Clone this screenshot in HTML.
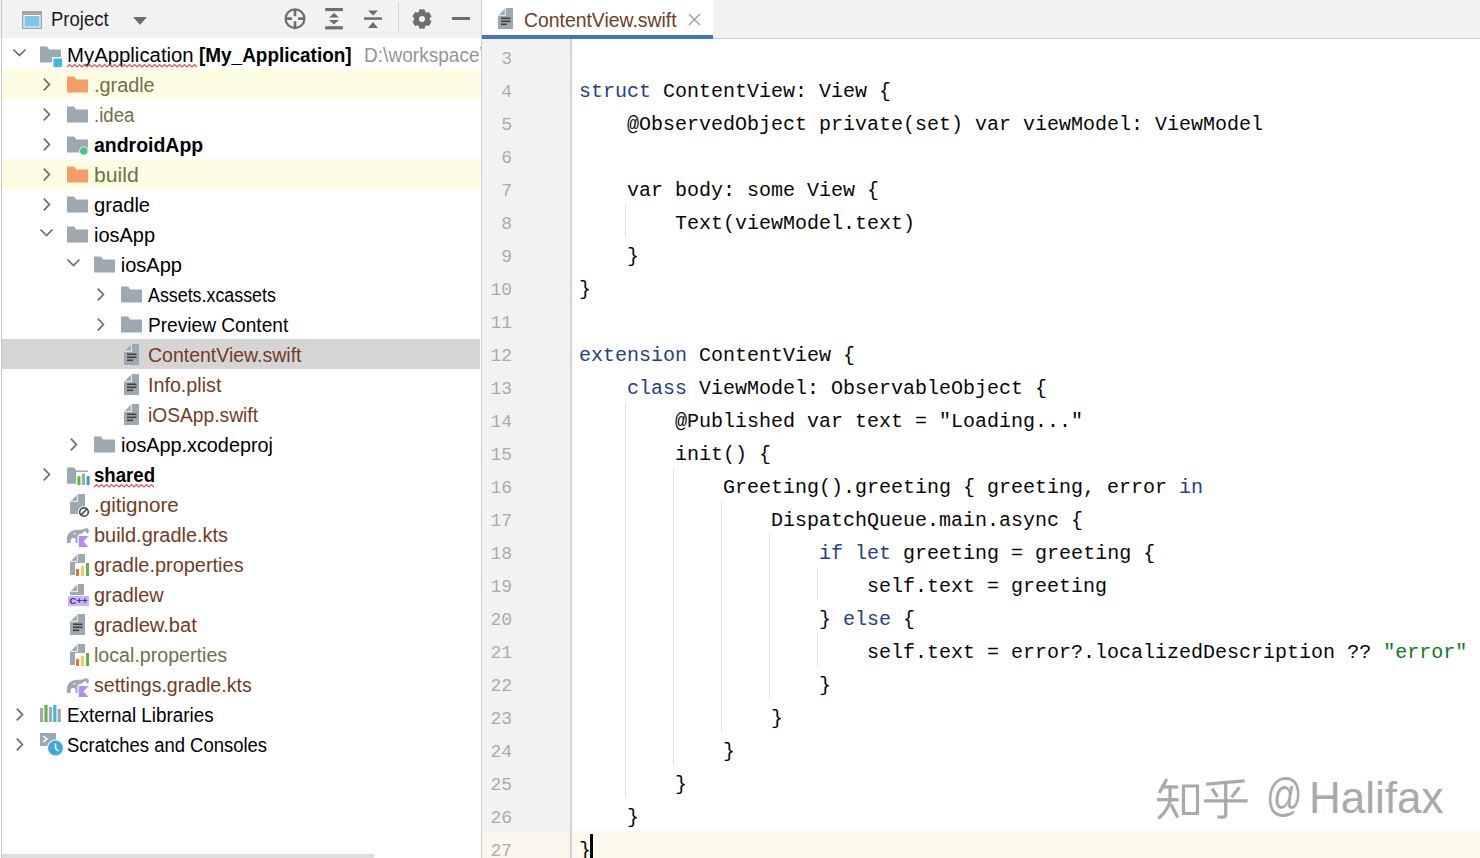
<!DOCTYPE html>
<html><head><meta charset="utf-8"><style>
html,body{margin:0;padding:0;}
body{width:1480px;height:858px;overflow:hidden;position:relative;background:#fff;font-family:"Liberation Sans",sans-serif;}
.a{position:absolute;}
.lbl{position:absolute;white-space:pre;font-size:20px;line-height:30px;transform-origin:0 0;}
.code{position:absolute;left:579px;white-space:pre;font-family:"Liberation Mono",monospace;font-size:20px;line-height:33px;color:#080808;}
.ln{position:absolute;left:482px;width:30px;text-align:right;font-family:"Liberation Mono",monospace;font-size:18px;line-height:33px;color:#ababab;}
.k{color:#22408c;}
.s{color:#067d17;}
.g{position:absolute;width:1px;background:#e0e0e0;}
</style></head><body>

<div class="a" style="left:0;top:0;width:481px;height:858px;overflow:hidden;">
<div class="a" style="left:0;top:0;width:481px;height:38px;background:#f2f2f2;"></div>
<div class="a" style="left:1px;top:0;width:1px;height:858px;background:#c8c8c8;"></div>
<svg class="a" style="left:21px;top:10px" width="22" height="20"><rect x="1" y="1" width="20" height="18" fill="#9ea8b0"/><rect x="2.5" y="5" width="17" height="12.5" fill="#fff"/><rect x="3.5" y="6" width="15" height="10.5" fill="#7fc5e8"/></svg>
<div class="lbl" style="left:51.30px;top:4px;color:#1a1a1a;transform:scaleX(0.9254);">Project</div>
<svg class="a" style="left:132px;top:16px" width="16" height="10"><path d="M1 1h14l-7 8z" fill="#6e6e6e"/></svg>
<svg class="a" style="left:282px;top:6px" width="26" height="26"><circle cx="13" cy="12.7" r="9.4" fill="none" stroke="#6e6e6e" stroke-width="2.2"/><path d="M13 4v6.2M13 15.2v6.6M4 12.7h6M16 12.7h6" stroke="#6e6e6e" stroke-width="2.7"/></svg>
<svg class="a" style="left:324px;top:7px" width="20" height="24"><rect x="1.2" y="1" width="17.7" height="3.1" fill="#6e6e6e"/><rect x="1.2" y="19.2" width="17.7" height="3.2" fill="#6e6e6e"/><path d="M10 6l5 4.5H5z" fill="#6e6e6e"/><path d="M10 17.6l5-4.6H5z" fill="#6e6e6e"/></svg>
<svg class="a" style="left:363px;top:7px" width="20" height="24"><rect x="1" y="10.3" width="18" height="2.5" fill="#6e6e6e"/><path d="M10 8.5l5-5H5z" fill="#6e6e6e"/><path d="M10 15l5 6H5z" fill="#6e6e6e"/></svg>
<div class="a" style="left:397.5px;top:2px;width:1.6px;height:30px;background:#d4d4d4;"></div>
<svg class="a" style="left:412px;top:9px" width="20" height="20"><path d="M7.12 3.00 L7.70 0.80 L12.30 0.80 L12.88 3.00 L14.62 4.01 L16.82 3.41 L19.12 7.39 L17.50 8.99 L17.50 11.01 L19.12 12.61 L16.82 16.59 L14.62 15.99 L12.88 17.00 L12.30 19.20 L7.70 19.20 L7.12 17.00 L5.38 15.99 L3.18 16.59 L0.88 12.61 L2.50 11.01 L2.50 8.99 L0.88 7.39 L3.18 3.41 L5.38 4.01z" fill="#6e6e6e" stroke="#6e6e6e" stroke-width="0.8" stroke-linejoin="round"/><circle cx="10" cy="10" r="7" fill="#6e6e6e"/><circle cx="10" cy="10" r="3" fill="#f2f2f2"/></svg>
<div class="a" style="left:452px;top:17px;width:18px;height:3px;background:#6e6e6e;"></div>
<svg class="a" style="left:12px;top:48.3px" width="15" height="10"><path d="M1.5 1.5l6 6l6-6" fill="none" stroke="#6e6e6e" stroke-width="1.7"/></svg>
<svg class="a" style="left:39.5px;top:46px;overflow:visible" width="24" height="24"><path d="M0 0.5h7l2.2 3H21v13H0z" fill="#9ea8b0"/><rect x="12" y="11" width="11" height="11" fill="#fff"/><rect x="13.5" y="12.5" width="8.5" height="8.5" fill="#40b6e0"/></svg>
<div class="lbl" style="left:66.80px;top:40px;color:#000000;transform:scaleX(1.0176);">MyApplication</div>
<div class="lbl" style="left:193.49px;top:40px;color:#000000;transform:scaleX(1.0000);"> </div>
<div class="lbl" style="left:199.05px;top:40px;color:#000000;font-weight:bold;transform:scaleX(0.9472);">[My_Application]</div>
<div class="lbl" style="left:351.67px;top:40px;color:#000000;transform:scaleX(1.0000);">  </div>
<div class="lbl" style="left:364.30px;top:40px;color:#959595;transform:scaleX(0.9545);">D:\workspace</div>
<div class="lbl" style="left:479.95px;top:40px;color:#959595;transform:scaleX(1.0000);">\MyApplication</div>
<div class="a" style="left:2px;top:69px;width:478px;height:30px;background:#fdfde4;"></div>
<svg class="a" style="left:42px;top:77px" width="10" height="15"><path d="M1.8 1.6l5.6 5.9l-5.6 5.9" fill="none" stroke="#6e6e6e" stroke-width="1.7"/></svg>
<svg class="a" style="left:66.5px;top:76px;overflow:visible" width="24" height="24"><path d="M0 0.5h7l2.2 3H21v13H0z" fill="#f59d66"/></svg>
<div class="lbl" style="left:93.80px;top:70px;color:#6f7146;transform:scaleX(0.9918);">.gradle</div>
<svg class="a" style="left:42px;top:107px" width="10" height="15"><path d="M1.8 1.6l5.6 5.9l-5.6 5.9" fill="none" stroke="#6e6e6e" stroke-width="1.7"/></svg>
<svg class="a" style="left:66.5px;top:106px;overflow:visible" width="24" height="24"><path d="M0 0.5h7l2.2 3H21v13H0z" fill="#9ea8b0"/></svg>
<div class="lbl" style="left:93.80px;top:100px;color:#6f7146;transform:scaleX(0.9318);">.idea</div>
<svg class="a" style="left:42px;top:137px" width="10" height="15"><path d="M1.8 1.6l5.6 5.9l-5.6 5.9" fill="none" stroke="#6e6e6e" stroke-width="1.7"/></svg>
<svg class="a" style="left:66.5px;top:136px;overflow:visible" width="24" height="24"><path d="M0 0.5h7l2.2 3H21v13H0z" fill="#9ea8b0"/><circle cx="16.8" cy="15" r="4.6" fill="#fff"/><circle cx="16.8" cy="15" r="3.8" fill="#3ec88a"/></svg>
<div class="lbl" style="left:93.80px;top:130px;color:#000000;font-weight:bold;transform:scaleX(0.9732);">androidApp</div>
<div class="a" style="left:2px;top:159px;width:478px;height:30px;background:#fdfde4;"></div>
<svg class="a" style="left:42px;top:167px" width="10" height="15"><path d="M1.8 1.6l5.6 5.9l-5.6 5.9" fill="none" stroke="#6e6e6e" stroke-width="1.7"/></svg>
<svg class="a" style="left:66.5px;top:166px;overflow:visible" width="24" height="24"><path d="M0 0.5h7l2.2 3H21v13H0z" fill="#f59d66"/></svg>
<div class="lbl" style="left:93.80px;top:160px;color:#6f7146;transform:scaleX(1.0595);">build</div>
<svg class="a" style="left:42px;top:197px" width="10" height="15"><path d="M1.8 1.6l5.6 5.9l-5.6 5.9" fill="none" stroke="#6e6e6e" stroke-width="1.7"/></svg>
<svg class="a" style="left:66.5px;top:196px;overflow:visible" width="24" height="24"><path d="M0 0.5h7l2.2 3H21v13H0z" fill="#9ea8b0"/></svg>
<div class="lbl" style="left:93.80px;top:190px;color:#000000;transform:scaleX(1.0089);">gradle</div>
<svg class="a" style="left:39px;top:228.3px" width="15" height="10"><path d="M1.5 1.5l6 6l6-6" fill="none" stroke="#6e6e6e" stroke-width="1.7"/></svg>
<svg class="a" style="left:66.5px;top:226px;overflow:visible" width="24" height="24"><path d="M0 0.5h7l2.2 3H21v13H0z" fill="#9ea8b0"/></svg>
<div class="lbl" style="left:93.80px;top:220px;color:#000000;transform:scaleX(0.9984);">iosApp</div>
<svg class="a" style="left:66px;top:258.3px" width="15" height="10"><path d="M1.5 1.5l6 6l6-6" fill="none" stroke="#6e6e6e" stroke-width="1.7"/></svg>
<svg class="a" style="left:93.5px;top:256px;overflow:visible" width="24" height="24"><path d="M0 0.5h7l2.2 3H21v13H0z" fill="#9ea8b0"/></svg>
<div class="lbl" style="left:120.80px;top:250px;color:#000000;transform:scaleX(1.0000);">iosApp</div>
<svg class="a" style="left:96px;top:287px" width="10" height="15"><path d="M1.8 1.6l5.6 5.9l-5.6 5.9" fill="none" stroke="#6e6e6e" stroke-width="1.7"/></svg>
<svg class="a" style="left:120.5px;top:286px;overflow:visible" width="24" height="24"><path d="M0 0.5h7l2.2 3H21v13H0z" fill="#9ea8b0"/></svg>
<div class="lbl" style="left:147.80px;top:280px;color:#000000;transform:scaleX(0.8916);">Assets.xcassets</div>
<svg class="a" style="left:96px;top:317px" width="10" height="15"><path d="M1.8 1.6l5.6 5.9l-5.6 5.9" fill="none" stroke="#6e6e6e" stroke-width="1.7"/></svg>
<svg class="a" style="left:120.5px;top:316px;overflow:visible" width="24" height="24"><path d="M0 0.5h7l2.2 3H21v13H0z" fill="#9ea8b0"/></svg>
<div class="lbl" style="left:147.80px;top:310px;color:#000000;transform:scaleX(0.9558);">Preview Content</div>
<div class="a" style="left:2px;top:339px;width:478px;height:30px;background:#d5d5d5;"></div>
<svg class="a" style="left:123.5px;top:344px;overflow:visible" width="24" height="24"><path d="M8 0h7v21H0V8z" fill="#9ea8b0"/><path d="M1.5 6.5L6.5 1.5V6.5z" fill="#9ea8b0"/><path d="M0 8L8 0v8z" fill="#fff" opacity="0.7"/><path d="M1.2 6.8L6.8 1.2V6.8z" fill="#9ea8b0"/><rect x="3" y="9.5" width="9.5" height="1.6" fill="#3d4247"/><rect x="3" y="12.5" width="9.5" height="1.6" fill="#3d4247"/><rect x="3" y="15.5" width="6" height="1.6" fill="#3d4247"/></svg>
<div class="lbl" style="left:147.80px;top:340px;color:#733c1e;transform:scaleX(0.9747);">ContentView.swift</div>
<svg class="a" style="left:123.5px;top:374px;overflow:visible" width="24" height="24"><path d="M8 0h7v21H0V8z" fill="#9ea8b0"/><path d="M1.5 6.5L6.5 1.5V6.5z" fill="#9ea8b0"/><path d="M0 8L8 0v8z" fill="#fff" opacity="0.7"/><path d="M1.2 6.8L6.8 1.2V6.8z" fill="#9ea8b0"/><rect x="3" y="9.5" width="9.5" height="1.6" fill="#3d4247"/><rect x="3" y="12.5" width="9.5" height="1.6" fill="#3d4247"/><rect x="3" y="15.5" width="6" height="1.6" fill="#3d4247"/></svg>
<div class="lbl" style="left:147.80px;top:370px;color:#733c1e;transform:scaleX(0.9853);">Info.plist</div>
<svg class="a" style="left:123.5px;top:404px;overflow:visible" width="24" height="24"><path d="M8 0h7v21H0V8z" fill="#9ea8b0"/><path d="M1.5 6.5L6.5 1.5V6.5z" fill="#9ea8b0"/><path d="M0 8L8 0v8z" fill="#fff" opacity="0.7"/><path d="M1.2 6.8L6.8 1.2V6.8z" fill="#9ea8b0"/><rect x="3" y="9.5" width="9.5" height="1.6" fill="#3d4247"/><rect x="3" y="12.5" width="9.5" height="1.6" fill="#3d4247"/><rect x="3" y="15.5" width="6" height="1.6" fill="#3d4247"/></svg>
<div class="lbl" style="left:147.80px;top:400px;color:#733c1e;transform:scaleX(0.9609);">iOSApp.swift</div>
<svg class="a" style="left:69px;top:437px" width="10" height="15"><path d="M1.8 1.6l5.6 5.9l-5.6 5.9" fill="none" stroke="#6e6e6e" stroke-width="1.7"/></svg>
<svg class="a" style="left:93.5px;top:436px;overflow:visible" width="24" height="24"><path d="M0 0.5h7l2.2 3H21v13H0z" fill="#9ea8b0"/></svg>
<div class="lbl" style="left:120.80px;top:430px;color:#000000;transform:scaleX(0.9902);">iosApp.xcodeproj</div>
<svg class="a" style="left:42px;top:467px" width="10" height="15"><path d="M1.8 1.6l5.6 5.9l-5.6 5.9" fill="none" stroke="#6e6e6e" stroke-width="1.7"/></svg>
<svg class="a" style="left:66.5px;top:466px;overflow:visible" width="24" height="24"><path d="M0 1.6h7l2.2 3H21v13.1H0z" fill="#9ea8b0"/><rect x="9.2" y="6" width="14.5" height="14" fill="#fff"/><rect x="10.4" y="10.3" width="3.1" height="8.7" fill="#62b543"/><rect x="14.9" y="7.5" width="3" height="11.5" fill="#9aa7b0"/><rect x="19.6" y="10" width="3" height="9" fill="#3d9fc0"/></svg>
<div class="lbl" style="left:93.80px;top:460px;color:#000000;font-weight:bold;transform:scaleX(0.9318);">shared</div>
<svg class="a" style="left:69.5px;top:494px;overflow:visible" width="24" height="24"><path d="M8 0h7v20H0V8z" fill="#9ea8b0"/><path d="M0 8L8 0v8z" fill="#fff" opacity="0.7"/><path d="M1.2 6.8L6.8 1.2V6.8z" fill="#9ea8b0"/><circle cx="14" cy="18" r="6" fill="#fff"/><circle cx="14" cy="18" r="4.3" fill="none" stroke="#3d4247" stroke-width="1.6"/><path d="M11 21L17 15" stroke="#3d4247" stroke-width="1.6"/></svg>
<div class="lbl" style="left:93.80px;top:490px;color:#733c1e;transform:scaleX(1.0305);">.gitignore</div>
<svg class="a" style="left:66.5px;top:525px;overflow:visible" width="24" height="24"><path d="M0 18C-1 12 1 7 6 5.5C9 4.5 13 5 16 4.5C18 3 20.5 2.5 21.5 4.5C22 6 21.8 7.5 21 8.8L19.4 7.8C19.6 6.5 18.5 5.6 17.3 6.5C16 8 14 9 11.5 9.5V18H8.5V14C7.5 12.8 5 12.8 4 14L3.5 18z" fill="#9ea8b0"/><rect x="6" y="8" width="3" height="1.5" fill="#fff" opacity="0.6"/><path d="M10.5 10.2H23L18 16.5L23 22.8H10.5z" fill="#fff"/><path d="M11.7 11H21.5L16.5 16.5L21.5 22H11.7z" fill="#b38ef5"/></svg>
<div class="lbl" style="left:93.80px;top:520px;color:#733c1e;transform:scaleX(0.9963);">build.gradle.kts</div>
<svg class="a" style="left:69.5px;top:554px;overflow:visible" width="24" height="24"><path d="M8 0h7v21H0V8z" fill="#9ea8b0"/><path d="M0 8L8 0v8z" fill="#fff" opacity="0.7"/><path d="M1.2 6.8L6.8 1.2V6.8z" fill="#9ea8b0"/><rect x="5" y="9" width="16" height="13" fill="#fff"/><rect x="6" y="15" width="3" height="7" fill="#e0752d"/><rect x="11" y="12" width="3" height="10" fill="#f4c76b"/><rect x="16" y="9" width="3" height="13" fill="#62b543"/></svg>
<div class="lbl" style="left:93.80px;top:550px;color:#733c1e;transform:scaleX(0.9967);">gradle.properties</div>
<svg class="a" style="left:67.5px;top:584px;overflow:visible" width="24" height="24"><path d="M10 0h6v11H2V8z" fill="#9ea8b0"/><path d="M2 8L10 0v8z" fill="#fff" opacity="0.7"/><path d="M3.2 6.8L8.8 1.2V6.8z" fill="#9ea8b0"/><rect x="0" y="12" width="21" height="10" fill="#b99bf8" opacity="0.75"/><text x="10.5" y="20.3" font-family="Liberation Sans" font-weight="bold" font-size="9.5" text-anchor="middle" fill="#4a2f8f">C++</text></svg>
<div class="lbl" style="left:93.80px;top:580px;color:#733c1e;transform:scaleX(0.9930);">gradlew</div>
<svg class="a" style="left:69.5px;top:614px;overflow:visible" width="24" height="24"><path d="M8 0h7v21H0V8z" fill="#9ea8b0"/><path d="M1.5 6.5L6.5 1.5V6.5z" fill="#9ea8b0"/><path d="M0 8L8 0v8z" fill="#fff" opacity="0.7"/><path d="M1.2 6.8L6.8 1.2V6.8z" fill="#9ea8b0"/><rect x="3" y="9.5" width="9.5" height="1.6" fill="#3d4247"/><rect x="3" y="12.5" width="9.5" height="1.6" fill="#3d4247"/><rect x="3" y="15.5" width="6" height="1.6" fill="#3d4247"/></svg>
<div class="lbl" style="left:93.80px;top:610px;color:#733c1e;transform:scaleX(1.0049);">gradlew.bat</div>
<svg class="a" style="left:69.5px;top:644px;overflow:visible" width="24" height="24"><path d="M8 0h7v21H0V8z" fill="#9ea8b0"/><path d="M0 8L8 0v8z" fill="#fff" opacity="0.7"/><path d="M1.2 6.8L6.8 1.2V6.8z" fill="#9ea8b0"/><rect x="5" y="9" width="16" height="13" fill="#fff"/><rect x="6" y="15" width="3" height="7" fill="#e0752d"/><rect x="11" y="12" width="3" height="10" fill="#f4c76b"/><rect x="16" y="9" width="3" height="13" fill="#62b543"/></svg>
<div class="lbl" style="left:93.80px;top:640px;color:#6f7146;transform:scaleX(0.9816);">local.properties</div>
<svg class="a" style="left:66.5px;top:675px;overflow:visible" width="24" height="24"><path d="M0 18C-1 12 1 7 6 5.5C9 4.5 13 5 16 4.5C18 3 20.5 2.5 21.5 4.5C22 6 21.8 7.5 21 8.8L19.4 7.8C19.6 6.5 18.5 5.6 17.3 6.5C16 8 14 9 11.5 9.5V18H8.5V14C7.5 12.8 5 12.8 4 14L3.5 18z" fill="#9ea8b0"/><rect x="6" y="8" width="3" height="1.5" fill="#fff" opacity="0.6"/><path d="M10.5 10.2H23L18 16.5L23 22.8H10.5z" fill="#fff"/><path d="M11.7 11H21.5L16.5 16.5L21.5 22H11.7z" fill="#b38ef5"/></svg>
<div class="lbl" style="left:93.80px;top:670px;color:#733c1e;transform:scaleX(0.9783);">settings.gradle.kts</div>
<svg class="a" style="left:15px;top:707px" width="10" height="15"><path d="M1.8 1.6l5.6 5.9l-5.6 5.9" fill="none" stroke="#6e6e6e" stroke-width="1.7"/></svg>
<svg class="a" style="left:39.5px;top:704px;overflow:visible" width="24" height="24"><rect x="0" y="4" width="3.2" height="14" fill="#9ea8b0"/><rect x="4.4" y="1" width="3.2" height="17" fill="#62b543"/><rect x="8.8" y="3" width="3.2" height="15" fill="#9ea8b0"/><rect x="13.2" y="1" width="3.2" height="17" fill="#40b6e0"/><rect x="17.6" y="5" width="3.2" height="13" fill="#9ea8b0"/></svg>
<div class="lbl" style="left:66.80px;top:700px;color:#000000;transform:scaleX(0.9417);">External Libraries</div>
<svg class="a" style="left:15px;top:737px" width="10" height="15"><path d="M1.8 1.6l5.6 5.9l-5.6 5.9" fill="none" stroke="#6e6e6e" stroke-width="1.7"/></svg>
<svg class="a" style="left:39.5px;top:733px;overflow:visible" width="24" height="24"><rect x="0" y="0" width="16" height="13" fill="#9ea8b0"/><path d="M3 3l4 3l-4 3" fill="none" stroke="#fff" stroke-width="1.5"/><circle cx="15.5" cy="15" r="8.5" fill="#fff"/><circle cx="15.5" cy="15" r="7.5" fill="#40a9d9"/><path d="M15.5 10.5v5l3 2.5" fill="none" stroke="#fff" stroke-width="1.6"/></svg>
<div class="lbl" style="left:66.80px;top:730px;color:#000000;transform:scaleX(0.9226);">Scratches and Consoles</div>
<svg class="a" style="left:0;top:0" width="482" height="858"><path d="M67 67 L69.5 64.5 L72.0 67 L74.5 64.5 L77.0 67 L79.5 64.5 L82.0 67 L84.5 64.5 L87.0 67 L89.5 64.5 L92.0 67 L94.5 64.5 L97.0 67 L99.5 64.5 L102.0 67 L104.5 64.5 L107.0 67 L109.5 64.5 L112.0 67 L114.5 64.5 L117.0 67 L119.5 64.5 L122.0 67 L124.5 64.5 L127.0 67 L129.5 64.5 L132.0 67 L134.5 64.5 L137.0 67 L139.5 64.5 L142.0 67 L144.5 64.5 L147.0 67 L149.5 64.5 L152.0 67 L154.5 64.5 L157.0 67 L159.5 64.5 L162.0 67 L164.5 64.5 L167.0 67 L169.5 64.5 L172.0 67 L174.5 64.5 L177.0 67 L179.5 64.5 L182.0 67 L184.5 64.5 L187.0 67 L189.5 64.5 L192.0 67 L194.5 64.5 L197.0 67" fill="none" stroke="#d9534f" stroke-width="1.2"/></svg>
<svg class="a" style="left:0;top:0" width="482" height="858"><path d="M94 487 L96.5 484.5 L99.0 487 L101.5 484.5 L104.0 487 L106.5 484.5 L109.0 487 L111.5 484.5 L114.0 487 L116.5 484.5 L119.0 487 L121.5 484.5 L124.0 487 L126.5 484.5 L129.0 487 L131.5 484.5 L134.0 487 L136.5 484.5 L139.0 487 L141.5 484.5 L144.0 487 L146.5 484.5 L149.0 487 L151.5 484.5 L154.0 487" fill="none" stroke="#d9534f" stroke-width="1.2"/></svg>
<div class="a" style="left:2px;top:854px;width:372px;height:4px;background:#dedede;"></div>
</div>
<div class="a" style="left:481px;top:0;width:1px;height:858px;background:#cbcbcb;"></div>
<div class="a" style="left:482px;top:0;width:998px;height:38px;background:#f2f2f2;"></div>
<div class="a" style="left:482px;top:38px;width:998px;height:1px;background:#cdcdcd;"></div>
<div class="a" style="left:482px;top:0;width:231px;height:39px;background:#ffffff;"></div>
<div class="a" style="left:482px;top:35px;width:231px;height:4px;background:#4577b3;"></div>
<svg class="a" style="left:498px;top:8px" width="18" height="23"><path d="M8 0h7v21H0V8z" fill="#9ea8b0"/><path d="M1.5 6.5L6.5 1.5V6.5z" fill="#9ea8b0"/><path d="M0 8L8 0v8z" fill="#fff" opacity="0.7"/><path d="M1.2 6.8L6.8 1.2V6.8z" fill="#9ea8b0"/><rect x="3" y="9.5" width="9.5" height="1.6" fill="#3d4247"/><rect x="3" y="12.5" width="9.5" height="1.6" fill="#3d4247"/><rect x="3" y="15.5" width="6" height="1.6" fill="#3d4247"/></svg>
<div class="lbl" style="left:524.40px;top:4.5px;color:#733c1e;transform:scaleX(0.9684);">ContentView.swift</div>
<svg class="a" style="left:688px;top:12.5px" width="13" height="13"><path d="M1 1l11 11M12 1L1 12" stroke="#a2a2a2" stroke-width="1.5"/></svg>
<div class="a" style="left:482px;top:39px;width:89px;height:819px;background:#f2f2f2;"></div>
<div class="a" style="left:570px;top:39px;width:2px;height:819px;background:#d2d2d2;"></div>
<div class="a" style="left:482px;top:831px;width:88px;height:27px;background:#faf8ec;"></div>
<div class="a" style="left:573px;top:831px;width:907px;height:27px;background:#fcfaed;"></div>
<div class="g" style="left:625px;top:204px;height:33px;"></div>
<div class="g" style="left:625px;top:402px;height:396px;"></div>
<div class="g" style="left:673px;top:468px;height:297px;"></div>
<div class="g" style="left:721px;top:501px;height:231px;"></div>
<div class="g" style="left:769px;top:534px;height:165px;"></div>
<div class="g" style="left:817px;top:567px;height:33px;"></div>
<div class="g" style="left:817px;top:633px;height:33px;"></div>
<div class="ln" style="top:42.5px;">3</div>
<div class="ln" style="top:75.5px;">4</div>
<div class="code" style="top:75px;"><span class="k">struct</span> ContentView: View {</div>
<div class="ln" style="top:108.5px;">5</div>
<div class="code" style="top:108px;">    @ObservedObject private(set) var viewModel: ViewModel</div>
<div class="ln" style="top:141.5px;">6</div>
<div class="ln" style="top:174.5px;">7</div>
<div class="code" style="top:174px;">    var body: some View {</div>
<div class="ln" style="top:207.5px;">8</div>
<div class="code" style="top:207px;">        Text(viewModel.text)</div>
<div class="ln" style="top:240.5px;">9</div>
<div class="code" style="top:240px;">    }</div>
<div class="ln" style="top:273.5px;">10</div>
<div class="code" style="top:273px;">}</div>
<div class="ln" style="top:306.5px;">11</div>
<div class="ln" style="top:339.5px;">12</div>
<div class="code" style="top:339px;"><span class="k">extension</span> ContentView {</div>
<div class="ln" style="top:372.5px;">13</div>
<div class="code" style="top:372px;">    <span class="k">class</span> ViewModel: ObservableObject {</div>
<div class="ln" style="top:405.5px;">14</div>
<div class="code" style="top:405px;">        @Published var text = &quot;Loading...&quot;</div>
<div class="ln" style="top:438.5px;">15</div>
<div class="code" style="top:438px;">        init() {</div>
<div class="ln" style="top:471.5px;">16</div>
<div class="code" style="top:471px;">            Greeting().greeting { greeting, error <span class="k">in</span></div>
<div class="ln" style="top:504.5px;">17</div>
<div class="code" style="top:504px;">                DispatchQueue.main.async {</div>
<div class="ln" style="top:537.5px;">18</div>
<div class="code" style="top:537px;">                    <span class="k">if</span> <span class="k">let</span> greeting = greeting {</div>
<div class="ln" style="top:570.5px;">19</div>
<div class="code" style="top:570px;">                        self.text = greeting</div>
<div class="ln" style="top:603.5px;">20</div>
<div class="code" style="top:603px;">                    } <span class="k">else</span> {</div>
<div class="ln" style="top:636.5px;">21</div>
<div class="code" style="top:636px;">                        self.text = error?.localizedDescription ?? <span class="s">&quot;error&quot;</span></div>
<div class="ln" style="top:669.5px;">22</div>
<div class="code" style="top:669px;">                    }</div>
<div class="ln" style="top:702.5px;">23</div>
<div class="code" style="top:702px;">                }</div>
<div class="ln" style="top:735.5px;">24</div>
<div class="code" style="top:735px;">            }</div>
<div class="ln" style="top:768.5px;">25</div>
<div class="code" style="top:768px;">        }</div>
<div class="ln" style="top:801.5px;">26</div>
<div class="code" style="top:801px;">    }</div>
<div class="ln" style="top:834.5px;">27</div>
<div class="code" style="top:834px;">}</div>
<div class="a" style="left:590.3px;top:834px;width:2.6px;height:24px;background:#000;"></div>
<svg class="a" style="left:1150px;top:770px" width="100" height="55"><g fill="none" stroke="#a9a9a9" stroke-width="3.2" stroke-linecap="square"><path d="M16 10.5L10 21.5"/><path d="M12.5 17H26.5"/><path d="M8.5 29.7H27"/><path d="M20 17V29.5"/><path d="M20.5 30.5Q17 41 9.5 47.5"/><path d="M21.8 36L27 46"/><path d="M33.5 16H47.5V43.5H33.5z"/><path d="M57.5 14L93 11"/><path d="M63 20L66.5 25.5"/><path d="M88.5 18.5L82.5 26"/><path d="M55.5 30.8H96"/><path d="M75.7 14V45.5Q75.7 47.5 69 47"/></g></svg>
<div class="a" style="left:1266px;top:767px;font-size:46px;line-height:56px;color:#a9a9a9;transform:scaleX(0.78);transform-origin:0 0;">@</div>
<div class="a" style="left:1309px;top:770px;font-size:44px;line-height:56px;color:#a9a9a9;">Halifax</div>
</body></html>
